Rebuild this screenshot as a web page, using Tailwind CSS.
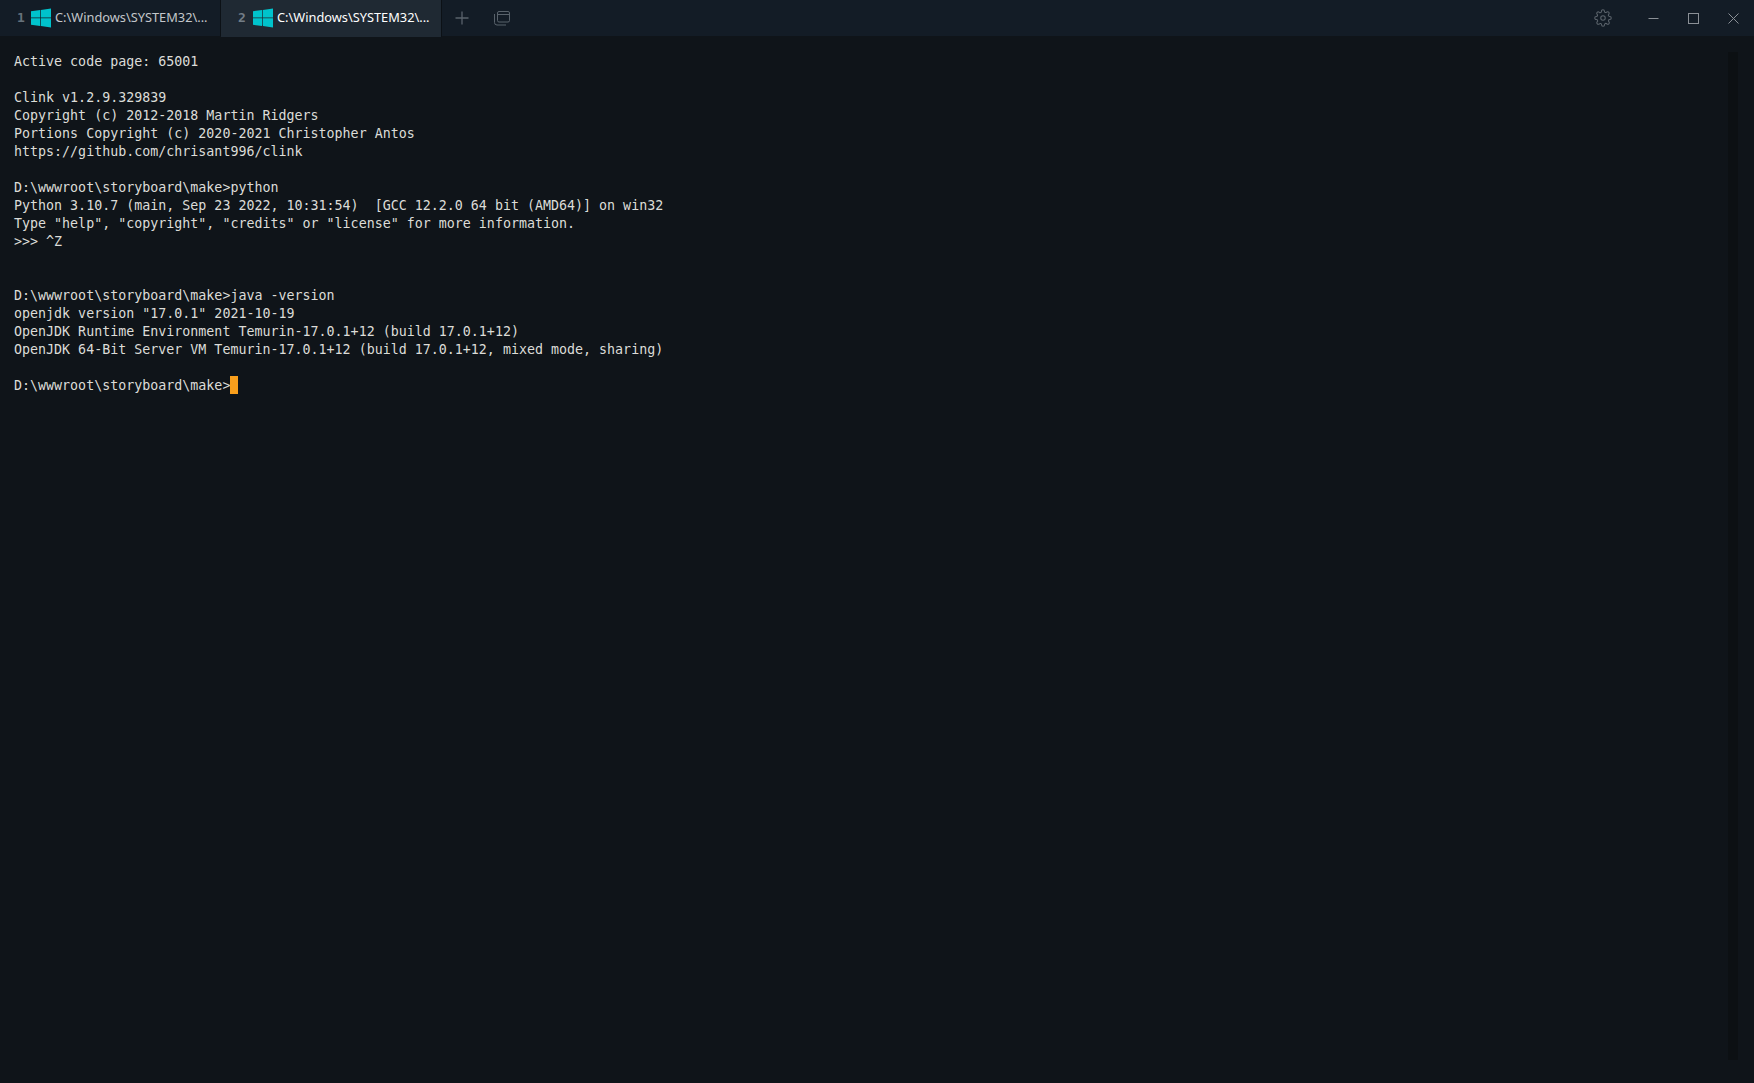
<!DOCTYPE html>
<html lang="en">
<head>
    <meta charset="UTF-8">
    <title>Terminal</title>
    <script src="https://cdn.jsdelivr.net/npm/@tailwindcss/browser@4"></script>
</head>
<body class="w-[1754px] h-[1083px] overflow-hidden bg-[#0f1419] flex flex-col">
    <!-- tab bar -->
    <header class="h-9 shrink-0 bg-[#131c26] flex items-stretch font-['Noto_Sans',sans-serif] text-[12.8px]">
        <div class="w-[221px] h-9 flex items-center pl-[17px] text-[#c3c7cb] border-r border-[#0c1116]">
            <span class="w-[14px] shrink-0 font-['DejaVu_Sans_Mono',monospace] text-[13px] font-bold text-[#66717b]">1</span>
            <svg class="shrink-0 w-5 h-5" viewBox="0 0 20 20" fill="#00c3cc"><path d="M0 3.2 9.2 2v7.6H0zM9.9 1.9 20 .4v9.2H9.9zM0 10.3h9.2V18L0 16.8zM9.9 10.3H20v9.3L9.9 18.1z"/></svg>
            <span class="ml-1 whitespace-nowrap">C:\Windows\SYSTEM32\...</span>
        </div>
        <div class="w-[221px] h-[37px] pb-px flex items-center pl-[17px] bg-[#1f2933] text-white border-r border-[#0c1116]">
            <span class="w-[15px] shrink-0 font-['DejaVu_Sans_Mono',monospace] text-[13px] font-bold text-[#727d87]">2</span>
            <svg class="shrink-0 w-5 h-5" viewBox="0 0 20 20" fill="#00c3cc"><path d="M0 3.2 9.2 2v7.6H0zM9.9 1.9 20 .4v9.2H9.9zM0 10.3h9.2V18L0 16.8zM9.9 10.3H20v9.3L9.9 18.1z"/></svg>
            <span class="ml-1 whitespace-nowrap">C:\Windows\SYSTEM32\...</span>
        </div>
        <div class="w-10 flex items-center justify-center">
            <svg class="w-3.5 h-3.5" viewBox="0 0 14 14" stroke="#59626b" stroke-width="1.3"><path d="M7 .5v13M.5 7h13"/></svg>
        </div>
        <div class="w-10 flex items-center justify-center">
            <svg class="w-4 h-4" viewBox="0 0 16 16" fill="none" stroke="#59626b" stroke-width="1"><rect x="3.5" y="1.5" width="12" height="10.5" rx="1.5"/><path d="M3.5 4.5h12M.5 4v8.5a2.5 2.5 0 0 0 2.5 2.5h9"/></svg>
        </div>
        <div class="ml-auto pr-px flex items-center">
            <svg class="w-[18px] h-[18px] mr-[21px]" viewBox="0 0 24 24" fill="none" stroke="#5c646c" stroke-width="1.4"><circle cx="12" cy="12" r="3"/><path d="M19.4 15a1.65 1.65 0 0 0 .33 1.82l.06.06a2 2 0 1 1-2.83 2.83l-.06-.06a1.65 1.65 0 0 0-2.82 1.17V21a2 2 0 1 1-4 0v-.09a1.65 1.65 0 0 0-2.82-1.17l-.06.06a2 2 0 1 1-2.83-2.83l.06-.06a1.65 1.65 0 0 0-1.17-2.82H3a2 2 0 1 1 0-4h.09a1.65 1.65 0 0 0 1.17-2.82l-.06-.06a2 2 0 1 1 2.83-2.83l.06.06a1.65 1.65 0 0 0 2.82-1.17V3a2 2 0 1 1 4 0v.09a1.65 1.65 0 0 0 2.82 1.17l.06-.06a2 2 0 1 1 2.83 2.83l-.06.06a1.65 1.65 0 0 0 1.17 2.82H21a2 2 0 1 1 0 4h-.09a1.65 1.65 0 0 0-1.51 1.09z"/></svg>
            <div class="w-10 flex justify-center"><svg class="w-[11px] h-[11px]" viewBox="0 0 11 11" stroke="#8b9096"><path d="M.5 5.5h10"/></svg></div>
            <div class="w-10 flex justify-center"><svg class="w-[11px] h-[11px]" viewBox="0 0 11 11" fill="none" stroke="#8b9096"><rect x=".5" y=".5" width="10" height="10"/></svg></div>
            <div class="w-10 flex justify-center"><svg class="w-[11px] h-[11px]" viewBox="0 0 11 11" stroke="#8b9096"><path d="m.5.5 10 10M10.5.5l-10 10"/></svg></div>
        </div>
    </header>

    <!-- terminal -->
    <main class="flex-1 flex pt-4 pl-[14px] pr-4 pb-[23px]">
        <pre class="flex-1 pt-px font-['DejaVu_Sans_Mono',monospace] text-[13.32px] leading-[18px] text-[#dcdcd8]">Active code page: 65001

Clink v1.2.9.329839
Copyright (c) 2012-2018 Martin Ridgers
Portions Copyright (c) 2020-2021 Christopher Antos
https://github.com/chrisant996/clink

D:\wwwroot\storyboard\make&gt;python
Python 3.10.7 (main, Sep 23 2022, 10:31:54)  [GCC 12.2.0 64 bit (AMD64)] on win32
Type "help", "copyright", "credits" or "license" for more information.
&gt;&gt;&gt; ^Z


D:\wwwroot\storyboard\make&gt;java -version
openjdk version "17.0.1" 2021-10-19
OpenJDK Runtime Environment Temurin-17.0.1+12 (build 17.0.1+12)
OpenJDK 64-Bit Server VM Temurin-17.0.1+12 (build 17.0.1+12, mixed mode, sharing)

D:\wwwroot\storyboard\make&gt;<span class="inline-block w-2 h-[18px] align-top -translate-y-px bg-[#f99f1c]"></span></pre>
        <div class="w-[10px] bg-[#0c1013]"></div>
    </main>
</body>
</html>
